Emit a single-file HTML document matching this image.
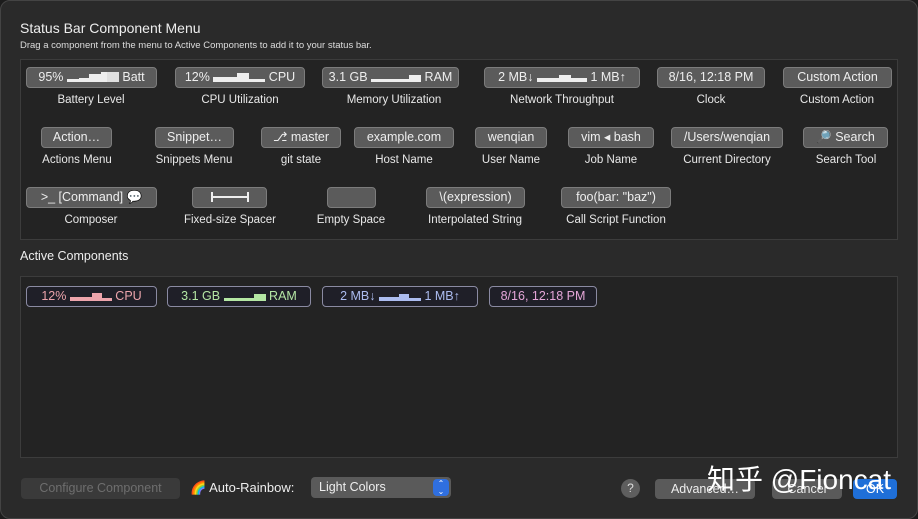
<!DOCTYPE html>
<html><head><meta charset="utf-8"><style>
*{box-sizing:border-box;margin:0;padding:0}
body{width:918px;height:519px;background:#1c1c1c;font-family:"Liberation Sans",sans-serif;color:#e6e6e6;overflow:hidden;position:relative}
.win{position:absolute;left:0;top:0;width:918px;height:519px;background:#2a2a2a;border:1px solid #444;border-radius:10px}
.box{position:absolute;left:20px;width:878px;background:#232323;border:1px solid #3c3c3c}
.b{position:absolute;height:21px;background:#5b5b5b;border:1px solid #7c7c7c;border-radius:4px;font-size:12.5px;line-height:19px;text-align:center;color:#eee;white-space:nowrap}
.l{position:absolute;font-size:11.5px;color:#e8e8e8;text-align:center;white-space:nowrap;transform:translateX(-50%)}
.spk{display:inline-block;vertical-align:-1px;height:10px;position:relative}
.spk i{position:absolute;bottom:0;background:currentColor}
.a{position:absolute;top:286px;height:21px;background:#1f1f28;border:1px solid #8a8aa2;border-radius:4px;font-size:12.5px;line-height:19px;text-align:center;white-space:nowrap}
</style></head><body>
<div class="win"></div>
<div style="position:absolute;left:20px;top:20px;font-size:14px;color:#eee">Status Bar Component Menu</div>
<div style="position:absolute;left:20px;top:40px;font-size:9.5px;color:#ddd">Drag a component from the menu to Active Components to add it to your status bar.</div>
<div class="box" style="top:59px;height:181px"></div>

<div class="b" style="left:26px;top:67px;width:131px">95% <span class="spk" style="width:52px;color:#eee"><i style="left:0;width:12px;height:3px"></i><i style="left:12px;width:10px;height:4px"></i><i style="left:22px;width:12px;height:8px"></i><i style="left:34px;width:6px;height:10px"></i><i style="left:40px;width:12px;height:10px;opacity:.9"></i></span> Batt</div>
<div class="l" style="left:91px;top:94px">Battery Level</div>
<div class="b" style="left:175px;top:67px;width:130px">12% <span class="spk" style="width:52px;color:#eee"><i style="left:0;width:24px;height:5px"></i><i style="left:24px;width:12px;height:9px"></i><i style="left:36px;width:16px;height:3px"></i></span> CPU</div>
<div class="l" style="left:240px;top:94px">CPU Utilization</div>
<div class="b" style="left:322px;top:67px;width:137px">3.1 GB <span class="spk" style="width:50px;color:#eee"><i style="left:0;width:38px;height:3px"></i><i style="left:38px;width:12px;height:7px"></i></span> RAM</div>
<div class="l" style="left:394px;top:94px">Memory Utilization</div>
<div class="b" style="left:484px;top:67px;width:156px">2 MB↓ <span class="spk" style="width:50px;color:#eee"><i style="left:0;width:22px;height:4px"></i><i style="left:22px;width:12px;height:7px"></i><i style="left:34px;width:16px;height:4px"></i></span> 1 MB↑</div>
<div class="l" style="left:562px;top:94px">Network Throughput</div>
<div class="b" style="left:657px;top:67px;width:108px">8/16, 12:18 PM</div>
<div class="l" style="left:711px;top:94px">Clock</div>
<div class="b" style="left:783px;top:67px;width:109px">Custom Action</div>
<div class="l" style="left:837px;top:94px">Custom Action</div>

<div class="b" style="left:41px;top:127px;width:71px">Action…</div>
<div class="l" style="left:77px;top:154px">Actions Menu</div>
<div class="b" style="left:155px;top:127px;width:79px">Snippet…</div>
<div class="l" style="left:194px;top:154px">Snippets Menu</div>
<div class="b" style="left:261px;top:127px;width:80px">⎇ master</div>
<div class="l" style="left:301px;top:154px">git state</div>
<div class="b" style="left:354px;top:127px;width:100px">example.com</div>
<div class="l" style="left:404px;top:154px">Host Name</div>
<div class="b" style="left:475px;top:127px;width:72px">wenqian</div>
<div class="l" style="left:511px;top:154px">User Name</div>
<div class="b" style="left:568px;top:127px;width:86px">vim ◂ bash</div>
<div class="l" style="left:611px;top:154px">Job Name</div>
<div class="b" style="left:671px;top:127px;width:112px">/Users/wenqian</div>
<div class="l" style="left:727px;top:154px">Current Directory</div>
<div class="b" style="left:803px;top:127px;width:85px">🔎 Search</div>
<div class="l" style="left:846px;top:154px">Search Tool</div>

<div class="b" style="left:26px;top:187px;width:131px">&gt;_ [Command] 💬</div>
<div class="l" style="left:91px;top:214px">Composer</div>
<div class="b" style="left:192px;top:187px;width:75px"><span style="display:inline-block;width:38px;height:10px;border-left:2px solid #eee;border-right:2px solid #eee;position:relative;vertical-align:-1px"><i style="position:absolute;left:0;right:0;top:4px;height:2px;background:#eee"></i></span></div>
<div class="l" style="left:230px;top:214px">Fixed-size Spacer</div>
<div class="b" style="left:327px;top:187px;width:49px"></div>
<div class="l" style="left:351px;top:214px">Empty Space</div>
<div class="b" style="left:426px;top:187px;width:99px">\(expression)</div>
<div class="l" style="left:475px;top:214px">Interpolated String</div>
<div class="b" style="left:561px;top:187px;width:110px">foo(bar: "baz")</div>
<div class="l" style="left:616px;top:214px">Call Script Function</div>

<div style="position:absolute;left:20px;top:249px;font-size:12.5px;color:#eee">Active Components</div>
<div class="box" style="top:276px;height:182px"></div>
<div class="a" style="left:26px;width:131px;color:#eca4ac">12% <span class="spk" style="width:42px"><i style="left:0;width:22px;height:4px"></i><i style="left:22px;width:10px;height:8px"></i><i style="left:32px;width:10px;height:3px"></i></span> CPU</div>
<div class="a" style="left:167px;width:144px;color:#b4e6a4">3.1 GB <span class="spk" style="width:42px"><i style="left:0;width:30px;height:3px"></i><i style="left:30px;width:12px;height:7px"></i></span> RAM</div>
<div class="a" style="left:322px;width:156px;color:#acbcf0">2 MB↓ <span class="spk" style="width:42px"><i style="left:0;width:20px;height:4px"></i><i style="left:20px;width:10px;height:7px"></i><i style="left:30px;width:12px;height:3px"></i></span> 1 MB↑</div>
<div class="a" style="left:489px;width:108px;color:#e4a6d8">8/16, 12:18 PM</div>

<div style="position:absolute;left:21px;top:478px;width:159px;height:21px;background:#3a3a3a;border-radius:4px;font-size:12.5px;line-height:21px;text-align:center;color:#6e6e6e">Configure Component</div>
<div style="position:absolute;left:190px;top:479px;font-size:13px;line-height:18px;color:#eee">🌈 Auto-Rainbow:</div>
<div style="position:absolute;left:311px;top:477px;width:140px;height:21px;background:#5a5a5a;border-radius:4px;font-size:12.5px;line-height:21px;padding-left:8px;color:#eee">Light Colors</div>
<div style="position:absolute;left:433px;top:479px;width:16px;height:17px;background:#2f6fe0;border-radius:4px;font-size:8px;line-height:8px;text-align:center;color:#fff;padding-top:1px">⌃<br>⌄</div>
<div style="position:absolute;left:621px;top:479px;width:19px;height:19px;border-radius:50%;background:#5e5e5e;font-size:12px;line-height:19px;text-align:center;color:#ddd">?</div>
<div style="position:absolute;left:655px;top:479px;width:100px;height:20px;background:#5a5a5a;border-radius:4px;font-size:12.5px;line-height:20px;text-align:center;color:#eee">Advanced…</div>
<div style="position:absolute;left:772px;top:479px;width:70px;height:20px;background:#5a5a5a;border-radius:4px;font-size:12.5px;line-height:20px;text-align:center;color:#eee">Cancel</div>
<div style="position:absolute;left:853px;top:479px;width:44px;height:20px;background:#1f6fd8;border-radius:4px;font-size:12.5px;line-height:20px;text-align:center;color:#fff">OK</div>
<div style="position:absolute;left:707px;top:463px;font-size:28px;line-height:34px;color:#fff;font-family:'Liberation Sans','Noto Sans CJK SC',sans-serif;white-space:nowrap">知乎 @Fioncat</div>
</body></html>
